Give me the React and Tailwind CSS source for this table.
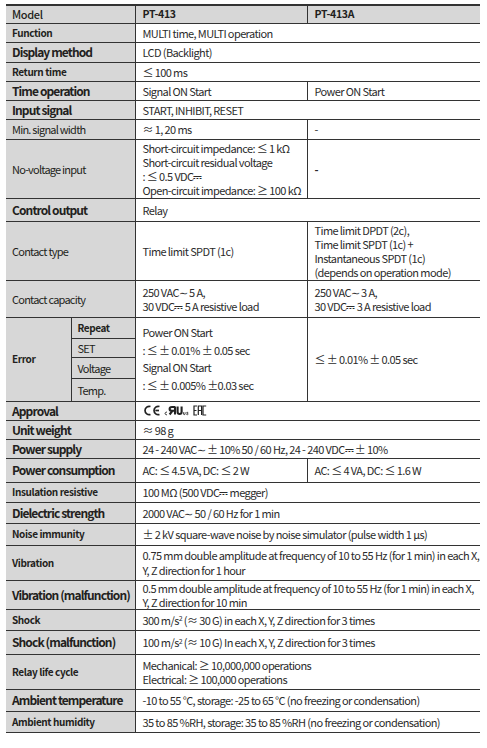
import React from "react";

// label cell text styles, by how the reference sets them
const labelSize = {
  lg: "text-[12px] font-bold tracking-[-0.075em]",
  sm: "text-[10px] font-bold tracking-[-0.04em]",
  rg: "text-[11px] font-normal tracking-[-0.07em]",
  md: "text-[11px] font-medium tracking-[-0.03em]",
};

const Label = ({ children, size = "lg", rowSpan, colSpan = 2, extra = "" }) => (
  <td
    rowSpan={rowSpan}
    colSpan={colSpan}
    className={`bg-[#d7d7d7] border-b border-r border-[#333] pl-[6px] leading-[14px] whitespace-nowrap text-[#231f20] ${labelSize[size]} ${extra}`}
  >
    {children}
  </td>
);

const Val = ({ children, colSpan = 1, rowSpan, split = false, extra = "" }) => (
  <td
    rowSpan={rowSpan}
    colSpan={colSpan}
    className={`border-b border-[#333] pl-[7px] text-[11px] leading-[14px] whitespace-nowrap tracking-[-0.055em] text-[#2b2b2b] ${split ? "border-r" : ""} ${extra}`}
  >
    {children}
  </td>
);

const Approvals = () => (
  <div className="flex items-center gap-[3px]">
    {/* CE mark */}
    <svg width="18" height="11" viewBox="0 0 18 11" fill="none" stroke="#222" strokeWidth="1.7">
      <path d="M7.5 1.5 A4.2 4.2 0 1 0 7.5 9.5" />
      <path d="M16.5 1.5 A4.2 4.2 0 1 0 16.5 9.5" />
      <path d="M12.3 5.5 H16" />
    </svg>
    {/* cULus mark */}
    <svg width="26" height="11" viewBox="0 0 26 11" fill="none" stroke="#222">
      <path d="M3 7.3 A1.3 1.3 0 1 0 3 9.6" strokeWidth="1" />
      <g strokeWidth="2.1">
        <path d="M11 1.5 V9.5" />
        <path d="M11 2 H8 Q5.6 2 5.6 4 Q5.6 5.8 8 5.8 H11" />
        <path d="M8.4 5.8 L5.6 9.5" />
        <path d="M13.6 1.5 V7 Q13.6 9 15.6 9 Q17.6 9 17.6 7 V1.5" />
      </g>
      <path d="M19.5 7.3 V8.8 Q19.5 9.6 20.3 9.6 Q21.1 9.6 21.1 8.8 V7.3" strokeWidth="0.9" />
      <path d="M24.2 7.4 Q22.4 7 22.5 8 Q22.6 8.4 23.4 8.5 Q24.3 8.7 24.2 9.2 Q24 9.9 22.4 9.5" strokeWidth="0.8" />
    </svg>
    {/* EAC mark */}
    <svg width="14" height="11" viewBox="0 0 14 11" fill="none" stroke="#222" strokeWidth="1.2">
      <path d="M4 1 H1 V10 H4 M1 5.5 H3.5" />
      <path d="M5.3 10 V1 H8.6 V10 M5.3 5.5 H8.6" />
      <path d="M13.2 1 H10 V10 H13.2" />
    </svg>
  </div>
);

export default function App() {
  return (
    <div className="bg-white w-[487px] h-[748px] pt-[4px] pl-[6px] font-['Noto_Sans_CJK_KR','Noto_Sans',sans-serif]">
      <table className="w-[474px] table-fixed border-collapse">
        <colgroup>
          <col className="w-[65px]" />
          <col className="w-[64px]" />
          <col className="w-[172px]" />
          <col className="w-[173px]" />
        </colgroup>
        <tbody>
          <tr className="h-[18px]">
            <Label size="md" extra="border-t-2">Model</Label>
            <td className="bg-[#d7d7d7] border-t-2 border-b border-r border-[#333] pl-[7px] text-[10.5px] font-bold tracking-[-0.03em] text-[#231f20]">PT-413</td>
            <td className="bg-[#d7d7d7] border-t-2 border-b border-[#333] pl-[7px] text-[10.5px] font-bold tracking-[-0.03em] text-[#231f20]">PT-413A</td>
          </tr>
          <tr className="h-[19px]">
            <Label size="sm">Function</Label>
            <Val colSpan={2}>MULTI time, MULTI operation</Val>
          </tr>
          <tr className="h-[20px]">
            <Label>Display method</Label>
            <Val colSpan={2}>LCD (Backlight)</Val>
          </tr>
          <tr className="h-[19px]">
            <Label size="sm">Return time</Label>
            <Val colSpan={2}>≤ 100 ms</Val>
          </tr>
          <tr className="h-[19px]">
            <Label>Time operation</Label>
            <Val split>Signal ON Start</Val>
            <Val>Power ON Start</Val>
          </tr>
          <tr className="h-[19px]">
            <Label>Input signal</Label>
            <Val colSpan={2}>START, INHIBIT, RESET</Val>
          </tr>
          <tr className="h-[20px]">
            <Label size="rg">Min. signal width</Label>
            <Val split>≈ 1, 20 ms</Val>
            <Val>-</Val>
          </tr>
          <tr className="h-[59px]">
            <Label size="rg">No-voltage input</Label>
            <Val split extra="leading-[13.5px]">
              Short-circuit impedance: ≤ 1 kΩ
              <br />
              Short-circuit residual voltage
              <br />: ≤ 0.5 VDC⎓
              <br />
              Open-circuit impedance: ≥ 100 kΩ
            </Val>
            <Val extra="font-bold">-</Val>
          </tr>
          <tr className="h-[23px]">
            <Label>Control output</Label>
            <Val colSpan={2}>Relay</Val>
          </tr>
          <tr className="h-[59px]">
            <Label size="rg">Contact type</Label>
            <Val split>Time limit SPDT (1c)</Val>
            <Val>
              Time limit DPDT (2c),
              <br />
              Time limit SPDT (1c) +
              <br />
              Instantaneous SPDT (1c)
              <br />
              (depends on operation mode)
            </Val>
          </tr>
          <tr className="h-[37px]">
            <Label size="rg">Contact capacity</Label>
            <Val split>
              250 VAC∼ 5 A,
              <br />
              30 VDC⎓ 5 A resistive load
            </Val>
            <Val>
              250 VAC∼ 3 A,
              <br />
              30 VDC⎓ 3 A resistive load
            </Val>
          </tr>
          <tr className="h-[21px]">
            <Label size="sm" colSpan={1} rowSpan={4}>Error</Label>
            <Label size="sm" colSpan={1}>Repeat</Label>
            <Val split rowSpan={4} extra="leading-[17.5px]">
              Power ON Start
              <br />: ≤ ± 0.01% ± 0.05 sec
              <br />
              Signal ON Start
              <br />: ≤ ± 0.005% ±0.03 sec
            </Val>
            <Val rowSpan={4}>≤ ± 0.01% ± 0.05 sec</Val>
          </tr>
          <tr className="h-[19px]">
            <Label size="rg" colSpan={1}>SET</Label>
          </tr>
          <tr className="h-[21px]">
            <Label size="rg" colSpan={1}>Voltage</Label>
          </tr>
          <tr className="h-[23px]">
            <Label size="rg" colSpan={1}>Temp.</Label>
          </tr>
          <tr className="h-[19px]">
            <Label>Approval</Label>
            <Val colSpan={2}>
              <Approvals />
            </Val>
          </tr>
          <tr className="h-[19px]">
            <Label>Unit weight</Label>
            <Val colSpan={2}>≈ 98 g</Val>
          </tr>
          <tr className="h-[19px]">
            <Label>Power supply</Label>
            <Val colSpan={2}>24 - 240 VAC∼ ± 10% 50 / 60 Hz, 24 - 240 VDC⎓ ± 10%</Val>
          </tr>
          <tr className="h-[24px]">
            <Label>Power consumption</Label>
            <Val split>AC: ≤ 4.5 VA, DC: ≤ 2 W</Val>
            <Val>AC: ≤ 4 VA, DC: ≤ 1.6 W</Val>
          </tr>
          <tr className="h-[20px]">
            <Label size="sm">Insulation resistive</Label>
            <Val colSpan={2}>100 MΩ (500 VDC⎓ megger)</Val>
          </tr>
          <tr className="h-[21px]">
            <Label>Dielectric strength</Label>
            <Val colSpan={2}>2000 VAC∼ 50 / 60 Hz for 1 min</Val>
          </tr>
          <tr className="h-[22px]">
            <Label size="sm">Noise immunity</Label>
            <Val colSpan={2}>± 2 kV square-wave noise by noise simulator (pulse width 1 μs)</Val>
          </tr>
          <tr className="h-[35px]">
            <Label size="sm">Vibration</Label>
            <Val colSpan={2} extra="leading-[15px]">
              0.75 mm double amplitude at frequency of 10 to 55 Hz (for 1 min) in each X,
              <br />
              Y, Z direction for 1 hour
            </Val>
          </tr>
          <tr className="h-[25px]">
            <Label>Vibration (malfunction)</Label>
            <Val colSpan={2} extra="leading-[12.5px]">
              0.5 mm double amplitude at frequency of 10 to 55 Hz (for 1 min) in each X,
              <br />
              Y, Z direction for 10 min
            </Val>
          </tr>
          <tr className="h-[21px]">
            <Label size="sm">Shock</Label>
            <Val colSpan={2}>
              300 m/s<sup className="text-[7px] leading-none">2</sup> (≈ 30 G) in each X, Y, Z direction for 3 times
            </Val>
          </tr>
          <tr className="h-[24px]">
            <Label>Shock (malfunction)</Label>
            <Val colSpan={2}>
              100 m/s<sup className="text-[7px] leading-none">2</sup> (≈ 10 G) In each X, Y, Z direction for 3 times
            </Val>
          </tr>
          <tr className="h-[35px]">
            <Label size="sm">Relay life cycle</Label>
            <Val colSpan={2}>
              Mechanical: ≥ 10,000,000 operations
              <br />
              Electrical: ≥ 100,000 operations
            </Val>
          </tr>
          <tr className="h-[22px]">
            <Label>Ambient temperature</Label>
            <Val colSpan={2}>-10 to 55 °C, storage: -25 to 65 °C (no freezing or condensation)</Val>
          </tr>
          <tr className="h-[21px]">
            <Label size="sm">Ambient humidity</Label>
            <Val colSpan={2}>35 to 85 %RH, storage: 35 to 85 %RH (no freezing or condensation)</Val>
          </tr>
        </tbody>
      </table>
    </div>
  );
}
